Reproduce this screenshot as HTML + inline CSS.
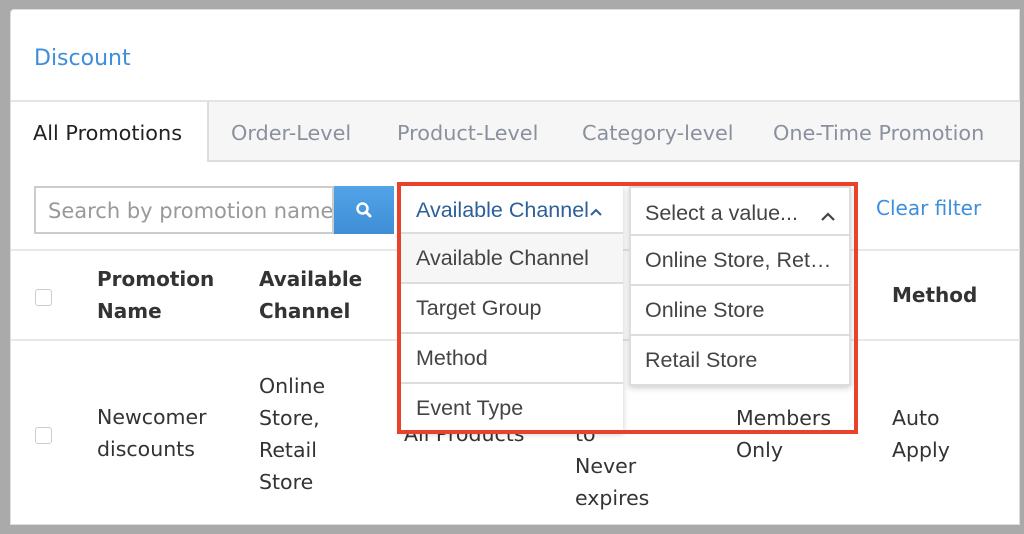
<!DOCTYPE html>
<html><head><style>
*{margin:0;padding:0;box-sizing:border-box}
body{width:1024px;height:534px;background:#aaa;position:relative;overflow:hidden;font-family:"Liberation Sans",sans-serif}
.a{position:absolute;white-space:nowrap}
.card{position:absolute;left:10px;top:9px;width:1010px;height:516px;background:#fff;border:1px solid #ddd;border-radius:4px 0 0 0}
.t{font-family:"DejaVu Sans","Liberation Sans",sans-serif;font-size:20.5px;color:#333;line-height:32px}
.h{font-weight:bold;font-size:20px}
.cb{position:absolute;width:17px;height:17px;border:1px solid #ccc;border-radius:3px;background:#fff}
.dd{position:absolute;background:#fff;box-shadow:0 2px 6px rgba(0,0,0,.2)}
.it{position:absolute;left:0;right:0;height:50px;border-top:2px solid #ddd;font-size:21.5px;color:#444;padding-left:15px;line-height:48px}
.tab{font-family:'DejaVu Sans',sans-serif;font-size:20.8px;color:#8a919e;top:121px}
</style></head><body>
<div class="card"></div>
<div class="a" style="left:34px;top:46px;font-family:'DejaVu Sans',sans-serif;font-size:22px;color:#3d8fdb">Discount</div>
<div class="a" style="left:11px;top:100px;width:1009px;height:2px;background:#e4e4e4"></div>
<div class="a" style="left:207px;top:102px;width:813px;height:60px;background:#f6f6f6;border-left:2px solid #ddd;border-bottom:2px solid #ddd"></div>
<div class="a tab" style="left:33px;color:#222">All Promotions</div>
<div class="a tab" style="left:231px">Order-Level</div>
<div class="a tab" style="left:397px">Product-Level</div>
<div class="a tab" style="left:582px">Category-level</div>
<div class="a tab" style="left:773px">One-Time Promotion</div>

<div class="a" style="left:34px;top:186px;width:300px;height:48px;border:2px solid #ccc;background:#fff;overflow:hidden"><span style="position:absolute;left:12px;top:11px;font-family:'DejaVu Sans',sans-serif;font-size:21px;color:#999">Search by promotion name</span></div>
<div class="a" style="left:334px;top:186px;width:60px;height:48px;background:linear-gradient(#52a3e8,#3f8ed6)">
<svg width="60" height="48"><circle cx="28.5" cy="22.5" r="5" fill="none" stroke="#fff" stroke-width="2.5"/><line x1="32" y1="26" x2="36" y2="30" stroke="#fff" stroke-width="3" stroke-linecap="round"/></svg></div>
<div class="a" style="left:876px;top:196px;font-family:'DejaVu Sans',sans-serif;font-size:20px;color:#3d8fdb">Clear filter</div>

<div class="a" style="left:11px;top:249px;width:1009px;height:2px;background:#e8e8e8"></div>
<div class="a" style="left:11px;top:339px;width:1009px;height:2px;background:#e8e8e8"></div>
<div class="cb" style="left:35px;top:289px"></div>
<div class="cb" style="left:35px;top:427px"></div>
<div class="a t h" style="left:97px;top:263px">Promotion<br>Name</div>
<div class="a t h" style="left:259px;top:263px">Available<br>Channel</div>
<div class="a t h" style="left:892px;top:279px">Method</div>
<div class="a t" style="left:97px;top:401px">Newcomer<br>discounts</div>
<div class="a t" style="left:259px;top:370px">Online<br>Store,<br>Retail<br>Store</div>
<div class="a t" style="left:404px;top:418px">All Products</div>
<div class="a t" style="left:575px;top:354px">1/<br>0 PM<br>to<br>Never<br>expires</div>
<div class="a t" style="left:736px;top:402px">Members<br>Only</div>
<div class="a t" style="left:892px;top:402px">Auto<br>Apply</div>

<div class="dd" style="left:401px;top:186px;width:222px;height:246px">
<div class="a" style="left:15px;top:12px;font-size:21.5px;color:#2d5f99">Available Channel<svg width="14" height="10" style="margin-left:0"><path d="M2 8 L7 3 L12 8" fill="none" stroke="#2d5f99" stroke-width="2"/></svg></div>
<div class="it" style="top:46px;background:#f6f6f6">Available Channel</div>
<div class="it" style="top:96px">Target Group</div>
<div class="it" style="top:146px">Method</div>
<div class="it" style="top:196px">Event Type</div>
</div>
<div class="dd" style="left:629px;top:186px;width:222px;height:200px;border:2px solid #ddd">
<div class="a" style="left:14px;top:13px;font-size:21.5px;color:#444">Select a value...</div>
<svg class="a" style="left:188px;top:22px" width="18" height="12"><path d="M3 10 L9 4 L15 10" fill="none" stroke="#444" stroke-width="2.2"/></svg>
<div class="it" style="top:46px;padding-left:14px">Online Store, Ret…</div>
<div class="it" style="top:96px;padding-left:14px">Online Store</div>
<div class="it" style="top:146px;padding-left:14px">Retail Store</div>
</div>
<div class="a" style="left:397px;top:182px;width:461px;height:252px;border:4px solid #e8432a"></div>
</body></html>
